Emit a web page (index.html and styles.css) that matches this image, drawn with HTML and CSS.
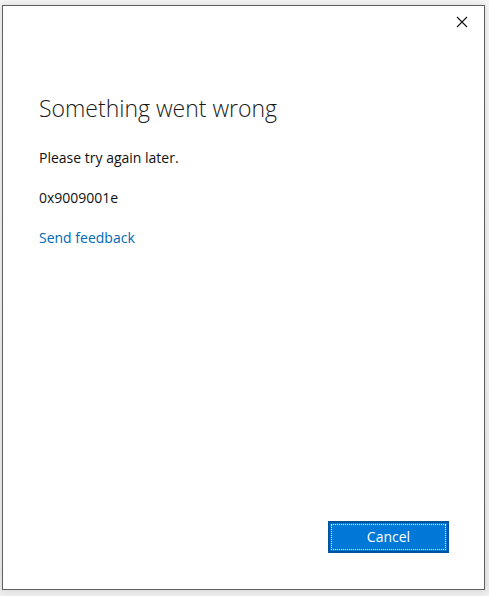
FILE: index.html
```html
<!DOCTYPE html>
<html>
<head>
<meta charset="utf-8">
<link rel="stylesheet" href="styles.css">
</head>
<body>
<div class="window">
  <div class="titlebar">
    <button class="close" aria-label="Close">
      <svg width="12" height="12" viewBox="0 0 12 12"><path d="M1 1 L11 11 M11 1 L1 11" stroke="#111" stroke-width="1.1" fill="none"/></svg>
    </button>
  </div>
  <div class="content">
    <h1 class="title">Something went wrong</h1>
    <p class="text">Please try again later.</p>
    <p class="text">0x9009001e</p>
    <a class="link" href="#">Send feedback</a>
  </div>
  <div class="footer">
    <button class="btn"><span class="focus">Cancel</span></button>
  </div>
</div>
</body>
</html>
```
FILE: styles.css
```css
html, body {
  margin: 0;
  padding: 0;
}
body {
  width: 489px;
  height: 596px;
  background: linear-gradient(#f4f4f4, #ececec);
  padding: 5px 0 0 2px;
  box-sizing: border-box;
  font-family: "Open Sans", "Noto Sans", sans-serif;
  overflow: hidden;
}
.window {
  width: 483px;
  height: 585px;
  box-sizing: border-box;
  border: 1px solid #5f5f5f;
  background: #fff;
  box-shadow: 0 0 6px rgba(0,0,0,0.12);
  display: flex;
  flex-direction: column;
}
.titlebar {
  height: 34px;
  display: flex;
  justify-content: flex-end;
  align-items: flex-start;
}
.close {
  margin: 10px 16px 0 0;
  width: 12px;
  height: 12px;
  padding: 0;
  border: 0;
  background: none;
  display: flex;
}
.content {
  flex: 1;
  padding: 53px 36px 0 36px;
}
.title {
  margin: 0 0 24px 0;
  font-size: 23px;
  font-weight: 300;
  color: #1a1a1a;
  line-height: 30px;
}
.text {
  margin: 0 0 18px 0;
  font-size: 14px;
  line-height: 22px;
  color: #111;
}
.text + .text {
  margin-bottom: 17px;
}
.link {
  font-size: 14px;
  line-height: 22px;
  color: #0067b8;
  text-decoration: none;
}
.footer {
  display: flex;
  justify-content: flex-end;
  padding: 0 35px 36px 0;
}
.btn {
  width: 121px;
  height: 32px;
  box-sizing: border-box;
  border: 2px solid #00539c;
  background: #0078d7;
  padding: 1px;
  display: flex;
}
.focus {
  flex: 1;
  border: 1px dotted #fff;
  color: #fff;
  font-family: "Open Sans", sans-serif;
  font-size: 14px;
  line-height: 24px;
  text-align: center;
}
```
